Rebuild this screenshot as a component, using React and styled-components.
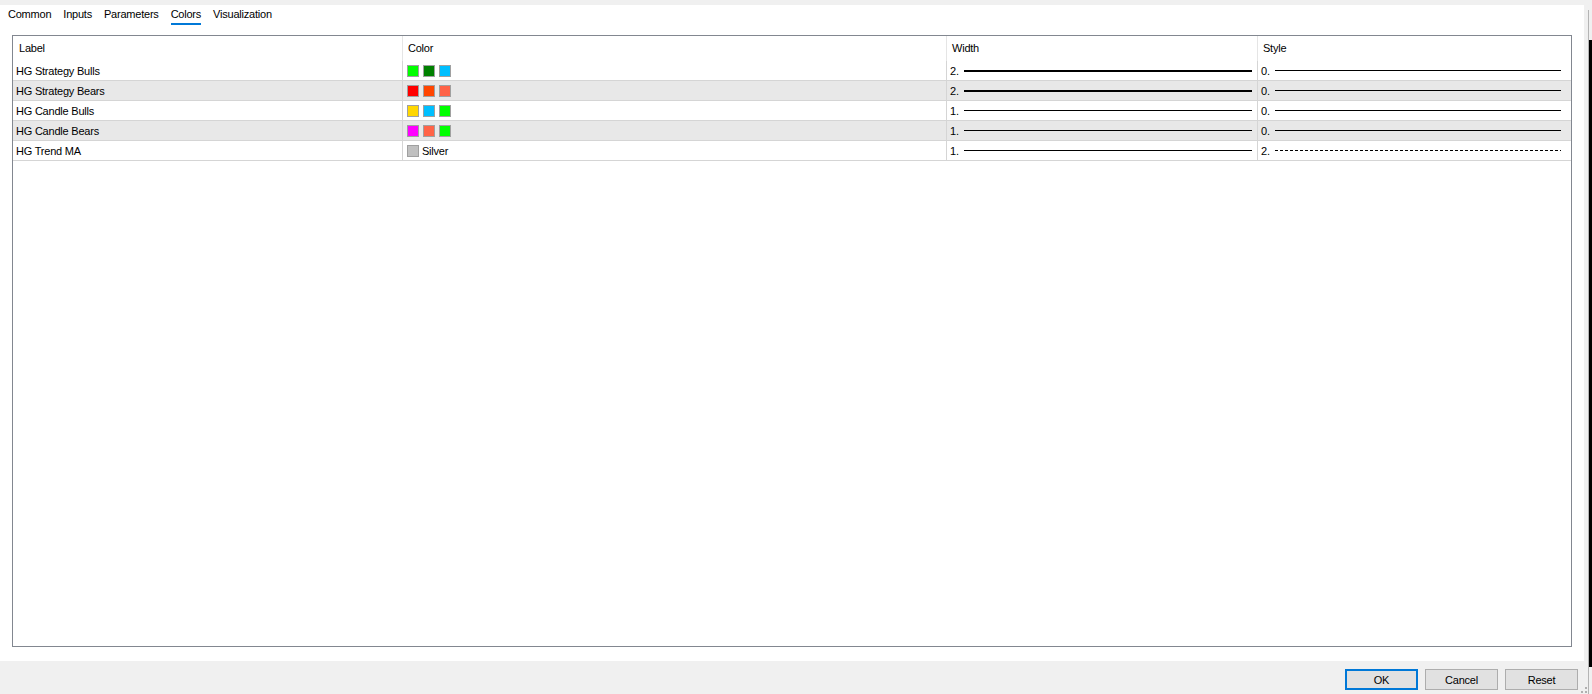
import React from "react";
import styled, { createGlobalStyle } from "styled-components";

const GlobalStyle = createGlobalStyle`
  html, body {
    margin: 0;
    padding: 0;
    background: #f0f0f0;
    overflow: hidden;
  }
  body {
    font-family: "Liberation Sans", Arial, sans-serif;
    font-size: 11px;
    letter-spacing: -0.22px;
    color: #000;
  }
`;

const Screen = styled.div`
  display: flex;
  width: 1592px;
  height: 694px;
`;

const Dialog = styled.div`
  position: relative;
  display: flex;
  flex-direction: column;
  width: 1588px;
  padding-top: 5px;
  box-sizing: border-box;
  background: #f0f0f0;
`;

const Page = styled.div`
  flex: 1;
  display: flex;
  flex-direction: column;
  margin-right: 4px;
  padding-bottom: 14px;
  background: #fff;
`;

const TabBar = styled.div`
  display: flex;
  height: 20px;
  padding-left: 2px;
`;

const Tab = styled.div`
  margin: 0 6px;
  padding: 3px 0 3px;
  line-height: 12px;
  height: 12px;
  border-bottom: 2px solid ${(p) => (p.$active ? "#0078d7" : "transparent")};
  white-space: nowrap;
`;

const Frame = styled.div`
  flex: 1;
  width: 1560px;
  margin: 10px 0 0 12px;
  border: 1px solid #828790;
  box-sizing: border-box;
  background: #fff;
`;

const Grid = styled.div`
  display: grid;
  grid-template-columns: 389px 544px 311px 314px;
`;

const HeaderRow = styled(Grid)`
  height: 25px;
`;

const HeaderCell = styled.div`
  padding-left: ${(p) => (p.$first ? "6px" : "5px")};
  border-left: ${(p) => (p.$first ? "none" : "1px solid #e5e5e5")};
  line-height: 25px;
  white-space: nowrap;
`;

const Row = styled(Grid)`
  height: 19px;
  border-bottom: 1px solid #d5d5d5;
  background: ${(p) => (p.$alt ? "#e8e8e8" : "#fff")};
`;

const Cell = styled.div`
  display: flex;
  align-items: center;
  gap: ${(p) => p.$gap || "4px"};
  min-width: 0;
  padding-left: ${(p) => p.$pl || "3px"};
  padding-right: ${(p) => p.$pr || "0px"};
  border-left: ${(p) => (p.$first ? "none" : "1px solid #d5d5d5")};
`;

const Text = styled.span`
  padding-top: 2px;
  line-height: 17px;
  white-space: nowrap;
`;

const Swatch = styled.span`
  width: 12px;
  height: 12px;
  box-sizing: border-box;
  border: 1px solid #a0a0a0;
  background: ${(p) => p.$color};
  flex: none;
`;

const SilverText = styled(Text)`
  margin-left: -1px;
`;

const LineSample = styled.span`
  flex: 1;
  height: ${(p) => p.$weight}px;
  background: ${(p) =>
    p.$dotted
      ? "repeating-linear-gradient(to right, #000 0 3px, transparent 3px 5px)"
      : "#000"};
`;

const Footer = styled.div`
  display: flex;
  justify-content: flex-end;
  align-items: flex-start;
  gap: 7px;
  height: 33px;
  padding: 8px 10px 0 0;
  box-sizing: border-box;
`;

const Button = styled.button`
  width: 73px;
  height: 21px;
  padding: 0;
  box-sizing: border-box;
  background: #e1e1e1;
  border: ${(p) => (p.$default ? "2px solid #0078d7" : "1px solid #adadad")};
  font-family: inherit;
  font-size: 11px;
  letter-spacing: -0.22px;
  color: #000;
`;

const Grip = styled.svg`
  position: absolute;
  right: 1px;
  bottom: 1px;
`;

const Edge = styled.div`
  display: flex;
  width: 4px;
  background: #f0f0f0;
`;

const EdgeLine = styled.div`
  width: 1px;
  margin-top: 10px;
  background: #b4b4b4;
`;

const EdgeShadow = styled.div`
  width: 3px;
  margin: 40px 0 27px;
  background: #000;
`;

const tabs = ["Common", "Inputs", "Parameters", "Colors", "Visualization"];

const rows = [
  { label: "HG Strategy Bulls", colors: ["#00ff00", "#008000", "#00bfff"], width: 2, style: 0 },
  { label: "HG Strategy Bears", colors: ["#ff0000", "#ff4500", "#ff6347"], width: 2, style: 0 },
  { label: "HG Candle Bulls", colors: ["#ffd700", "#00bfff", "#00ff00"], width: 1, style: 0 },
  { label: "HG Candle Bears", colors: ["#ff00ff", "#ff6347", "#00ff00"], width: 1, style: 0 },
  { label: "HG Trend MA", colors: ["#c0c0c0"], name: "Silver", width: 1, style: 2 },
];

const App = () => {
  return (
    <Screen>
      <GlobalStyle />
      <Dialog>
        <Page>
          <TabBar>
            {tabs.map((t) => (
              <Tab key={t} $active={t === "Colors"}>
                {t}
              </Tab>
            ))}
          </TabBar>
          <Frame>
            <HeaderRow>
              <HeaderCell $first>Label</HeaderCell>
              <HeaderCell>Color</HeaderCell>
              <HeaderCell>Width</HeaderCell>
              <HeaderCell>Style</HeaderCell>
            </HeaderRow>
            {rows.map((r, i) => (
              <Row key={r.label} $alt={i % 2 === 1}>
                <Cell $first>
                  <Text>{r.label}</Text>
                </Cell>
                <Cell $pl="4px">
                  {r.colors.map((c, j) => (
                    <Swatch key={j} $color={c} />
                  ))}
                  {r.name && <SilverText>{r.name}</SilverText>}
                </Cell>
                <Cell $gap="5px" $pr="5px">
                  <Text>{r.width}.</Text>
                  <LineSample $weight={r.width} />
                </Cell>
                <Cell $gap="5px" $pr="10px">
                  <Text>{r.style}.</Text>
                  <LineSample $weight={1} $dotted={r.style === 2} />
                </Cell>
              </Row>
            ))}
          </Frame>
        </Page>
        <Footer>
          <Button $default>OK</Button>
          <Button>Cancel</Button>
          <Button>Reset</Button>
        </Footer>
        <Grip width="6" height="6" viewBox="0 0 6 6">
          <rect x="4" y="0" width="2" height="2" fill="#b0b0b0" />
          <rect x="0" y="4" width="2" height="2" fill="#b0b0b0" />
          <rect x="4" y="4" width="2" height="2" fill="#b0b0b0" />
        </Grip>
      </Dialog>
      <Edge>
        <EdgeLine />
        <EdgeShadow />
      </Edge>
    </Screen>
  );
};

export default App;
